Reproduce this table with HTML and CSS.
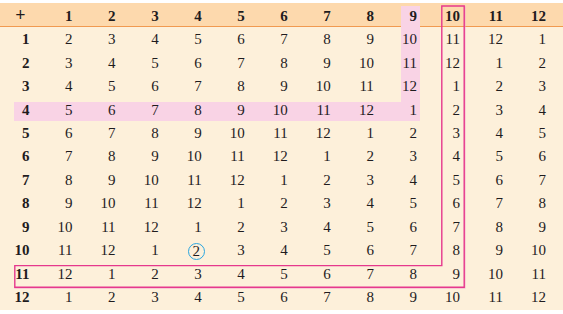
FILE: index.html
```html
<!DOCTYPE html>
<html lang="en">
<head>
<meta charset="utf-8">
<title>Clock addition table</title>
<link rel="stylesheet" href="styles.css">
</head>
<body>
<div class="sheet">
  <svg class="marks" width="563" height="307" viewBox="0 0 563 307" aria-hidden="true">
    <rect x="401" y="3" width="19" height="115" fill="#f9d3e5"/>
    <rect x="14" y="99" width="406" height="19" fill="#f9d3e5"/>
    <polyline points="464.8,3.3 464.8,285 14.3,285" fill="none" stroke="#f4a3c9" stroke-width="1.2"/>
    <polygon points="14.8,262.6 441.8,262.6 441.8,3 464.2,3 464.2,284.2 14.8,284.2" fill="none" stroke="#e6388d" stroke-width="1.4"/>
  </svg>
  <div class="head">
    <span class="c plus">+</span><span class="c">1</span><span class="c">2</span><span class="c">3</span><span class="c">4</span><span class="c">5</span><span class="c">6</span><span class="c">7</span><span class="c">8</span><span class="c">9</span><span class="c">10</span><span class="c">11</span><span class="c">12</span>
  </div>
  <div class="rows">
    <span class="c lab">1</span><span class="c">2</span><span class="c">3</span><span class="c">4</span><span class="c">5</span><span class="c">6</span><span class="c">7</span><span class="c">8</span><span class="c">9</span><span class="c">10</span><span class="c">11</span><span class="c">12</span><span class="c">1</span>
    <span class="c lab">2</span><span class="c">3</span><span class="c">4</span><span class="c">5</span><span class="c">6</span><span class="c">7</span><span class="c">8</span><span class="c">9</span><span class="c">10</span><span class="c">11</span><span class="c">12</span><span class="c">1</span><span class="c">2</span>
    <span class="c lab">3</span><span class="c">4</span><span class="c">5</span><span class="c">6</span><span class="c">7</span><span class="c">8</span><span class="c">9</span><span class="c">10</span><span class="c">11</span><span class="c">12</span><span class="c">1</span><span class="c">2</span><span class="c">3</span>
    <span class="c lab">4</span><span class="c">5</span><span class="c">6</span><span class="c">7</span><span class="c">8</span><span class="c">9</span><span class="c">10</span><span class="c">11</span><span class="c">12</span><span class="c">1</span><span class="c">2</span><span class="c">3</span><span class="c">4</span>
    <span class="c lab">5</span><span class="c">6</span><span class="c">7</span><span class="c">8</span><span class="c">9</span><span class="c">10</span><span class="c">11</span><span class="c">12</span><span class="c">1</span><span class="c">2</span><span class="c">3</span><span class="c">4</span><span class="c">5</span>
    <span class="c lab">6</span><span class="c">7</span><span class="c">8</span><span class="c">9</span><span class="c">10</span><span class="c">11</span><span class="c">12</span><span class="c">1</span><span class="c">2</span><span class="c">3</span><span class="c">4</span><span class="c">5</span><span class="c">6</span>
    <span class="c lab">7</span><span class="c">8</span><span class="c">9</span><span class="c">10</span><span class="c">11</span><span class="c">12</span><span class="c">1</span><span class="c">2</span><span class="c">3</span><span class="c">4</span><span class="c">5</span><span class="c">6</span><span class="c">7</span>
    <span class="c lab">8</span><span class="c">9</span><span class="c">10</span><span class="c">11</span><span class="c">12</span><span class="c">1</span><span class="c">2</span><span class="c">3</span><span class="c">4</span><span class="c">5</span><span class="c">6</span><span class="c">7</span><span class="c">8</span>
    <span class="c lab">9</span><span class="c">10</span><span class="c">11</span><span class="c">12</span><span class="c">1</span><span class="c">2</span><span class="c">3</span><span class="c">4</span><span class="c">5</span><span class="c">6</span><span class="c">7</span><span class="c">8</span><span class="c">9</span>
    <span class="c lab">10</span><span class="c">11</span><span class="c">12</span><span class="c">1</span><span class="c"><span class="ring">2</span></span><span class="c">3</span><span class="c">4</span><span class="c">5</span><span class="c">6</span><span class="c">7</span><span class="c">8</span><span class="c">9</span><span class="c">10</span>
    <span class="c lab">11</span><span class="c">12</span><span class="c">1</span><span class="c">2</span><span class="c">3</span><span class="c">4</span><span class="c">5</span><span class="c">6</span><span class="c">7</span><span class="c">8</span><span class="c">9</span><span class="c">10</span><span class="c">11</span>
    <span class="c lab">12</span><span class="c">1</span><span class="c">2</span><span class="c">3</span><span class="c">4</span><span class="c">5</span><span class="c">6</span><span class="c">7</span><span class="c">8</span><span class="c">9</span><span class="c">10</span><span class="c">11</span><span class="c">12</span>
  </div>
</div>
</body>
</html>
```
FILE: styles.css
```css
html, body {
  margin: 0;
  padding: 0;
  background: #ffffff;
}
body {
  padding-top: 3px;
  font-family: "Liberation Serif", "Times New Roman", serif;
  font-size: 15px;
  color: #1f1c1e;
}
.sheet {
  position: relative;
  width: 563px;
  background: #fdf0da;
  padding-bottom: 0.4px;
}
.marks {
  position: absolute;
  left: 0;
  top: 0;
  z-index: 0;
}
.head, .rows {
  display: grid;
  grid-template-columns: 29.5px repeat(12, 43.05px);
}
.head {
  background: #fdd9ad;
  border-bottom: 1px solid #f19a50;
  grid-template-rows: 23px;
  font-weight: bold;
}
.head .c {
  line-height: 26px;
  height: 23px;
}
.head .plus {
  font-size: 18px;
  line-height: 25px;
  padding-right: 3.9px;
}
.rows {
  padding-top: 1.2px;
  grid-auto-rows: 23.45px;
}
.c {
  position: relative;
  z-index: 1;
  text-align: right;
  line-height: 23.45px;
  white-space: nowrap;
}
.lab {
  font-weight: bold;
}
.ring {
  display: inline-block;
  box-sizing: border-box;
  width: 17px;
  height: 17px;
  border: 1.3px solid #2ba6df;
  border-radius: 50%;
  text-align: center;
  line-height: 15px;
  margin-right: -3px;
  vertical-align: -1px;
}
```
